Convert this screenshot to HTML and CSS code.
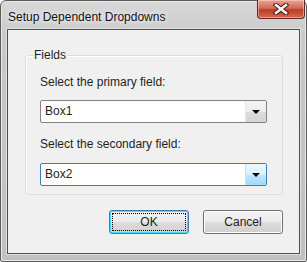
FILE: index.html
```html
<!DOCTYPE html>
<html lang="en">
	<head>
		<meta charset="UTF-8" />
		<meta name="viewport" content="width=device-width, initial-scale=1.0" />
		<title>Setup Dependent Dropdowns</title>
		<link rel="stylesheet" href="styles.css">
	</head>
	<body>
		<div class="window">
			<div class="titlebar">
				<span class="title">Setup Dependent Dropdowns</span>
				<button class="close" title="Close">
					<svg width="18" height="12" viewBox="0 0 18 12">
						<path d="M4 2 L14 10 M14 2 L4 10" stroke="#4a1a14" stroke-width="4.6" stroke-linecap="square" fill="none" />
						<path d="M4 2 L14 10 M14 2 L4 10" stroke="#f4f4f4" stroke-width="2.6" stroke-linecap="square" fill="none" />
					</svg>
				</button>
			</div>
			<div class="client">
				<fieldset class="group">
					<legend>Fields</legend>
					<div class="fields">
						<label class="label">Select the primary field:</label>
						<div class="combo">
							<span class="combo-value">Box1</span>
							<span class="combo-arrow"></span>
						</div>
						<label class="label">Select the secondary field:</label>
						<div class="combo focused">
							<span class="combo-value">Box2</span>
							<span class="combo-arrow"></span>
						</div>
					</div>
				</fieldset>
				<div class="actions">
					<button class="button default"><span class="focus">OK</span></button>
					<button class="button">Cancel</button>
				</div>
			</div>
		</div>
	</body>
</html>
```

FILE: styles.css
```css
body {
	margin: 0;
	background-color: #fff;
	font-family: "Liberation Sans", Arial, sans-serif;
	font-size: 12px;
	color: #1e1e1e;
}
.window {
	width: 307px;
	height: 262px;
	box-sizing: border-box;
	border: 1px solid #5c5c5c;
	border-radius: 6px 6px 2px 2px;
	background: linear-gradient(to bottom, #d8d8d8, #c8c8c8 40px, #c0c0c0);
	box-shadow: inset 0 0 0 1px #e8e8e8;
	padding: 0 6px 7px 6px;
	display: flex;
	flex-direction: column;
}
.titlebar {
	height: 28px;
	display: flex;
	align-items: flex-start;
	justify-content: space-between;
}
.title {
	margin: 8px 0 0 1px;
	line-height: 16px;
	color: #0f0f0f;
	text-shadow: 0 0 6px #f4f4f4, 0 0 3px #f4f4f4;
}
.close {
	width: 48px;
	height: 19px;
	margin: -1px -5px 0 0;
	padding: 0;
	border: 1px solid #5a2a22;
	border-top: none;
	border-radius: 0 0 4px 4px;
	background: linear-gradient(to bottom, #e8a496, #d16b58 45%, #bf3b24 55%, #d4694f);
	box-shadow: inset 0 0 0 1px rgba(255, 220, 210, 0.5);
	display: flex;
	align-items: center;
	justify-content: center;
}
.client {
	flex: 1;
	border: 1px solid #4d4d4d;
	background-color: #f0f0f0;
	box-shadow: 0 0 0 1px #e2e2e2;
	display: flex;
	flex-direction: column;
}
.group {
	margin: 17px 16px 0 17px;
	padding: 0 15px 8px 14px;
	border: 1px solid #d5dfe5;
	border-radius: 3px;
	box-shadow: inset 1px 1px 0 #fff;
}
.group legend {
	margin-left: -7px;
	padding: 0 1px;
	line-height: 16px;
}
.fields {
	display: flex;
	flex-direction: column;
}
.label {
	line-height: 15px;
	margin: 12px 0 10px 0;
}
.combo + .label {
	margin-top: 14px;
	margin-bottom: 11px;
}
.combo {
	height: 23px;
	box-sizing: border-box;
	border: 1px solid #838383;
	border-radius: 2px;
	background-color: #fff;
	display: flex;
}
.combo-value {
	flex: 1;
	padding-left: 4px;
	line-height: 21px;
}
.combo-arrow {
	width: 20px;
	border-left: 1px solid #e6e6e6;
	background: linear-gradient(to bottom, #f4f4f4, #ececec 50%, #dcdcdc 50%, #d4d4d4);
	position: relative;
}
.combo-arrow::after {
	content: "";
	position: absolute;
	left: 6px;
	top: 9px;
	border-left: 4px solid transparent;
	border-right: 4px solid transparent;
	border-top: 4px solid #000;
}
.combo.focused {
	border-color: #3c7fb1;
}
.combo.focused .combo-arrow {
	border-left-color: #bfe3f7;
	background: linear-gradient(to bottom, #eaf6fd, #d9f0fc 50%, #bee6fd 50%, #a7d9f5);
}
.actions {
	display: flex;
	justify-content: flex-end;
	gap: 14px;
	margin: 15px 16px 0 0;
}
.button {
	width: 80px;
	height: 24px;
	padding: 0;
	border: 1px solid #707070;
	border-radius: 3px;
	background: linear-gradient(to bottom, #f2f2f2, #ebebeb 50%, #dddddd 50%, #cfcfcf);
	box-shadow: inset 0 0 0 1px #fcfcfc;
	font-family: inherit;
	font-size: 12px;
	color: #1e1e1e;
}
.button.default {
	border-color: #3c7fb1;
	box-shadow: inset 0 0 0 1px #48d8fb;
	padding: 2px;
}
.focus {
	display: block;
	height: 100%;
	box-sizing: border-box;
	border: 1px dotted #000;
	line-height: 16px;
}
```
